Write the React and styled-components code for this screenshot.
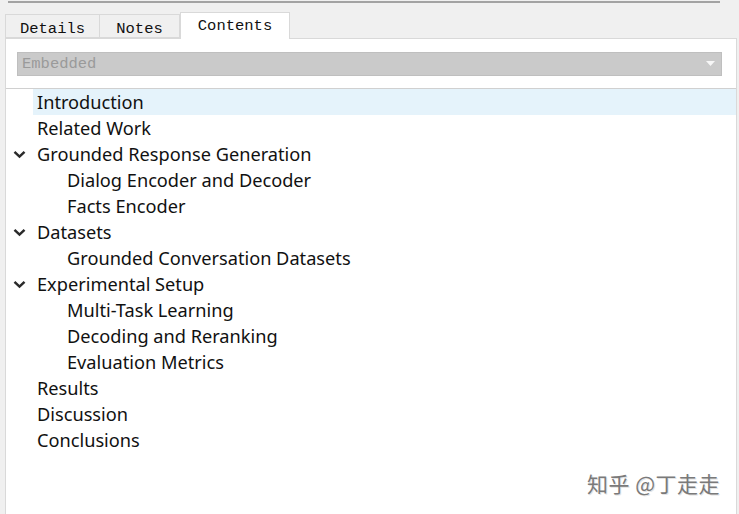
import React from 'react';
import styled, { createGlobalStyle } from 'styled-components';

const GlobalStyle = createGlobalStyle`
  html, body {
    margin: 0;
    padding: 0;
    background: #f0f0f0;
  }
`;

const Window = styled.div`
  position: relative;
  width: 739px;
  height: 514px;
  display: flex;
  flex-direction: column;
  background: #f0f0f0;
  overflow: hidden;
`;

const TopEdge = styled.div`
  height: 1px;
  margin: 0 19px 0 8px;
  border-bottom: 2px solid #a3a3a3;
`;

const TabStrip = styled.div`
  display: flex;
  align-items: flex-end;
  height: 35px;
  padding-left: 5px;
`;

const Tab = styled.div`
  box-sizing: border-box;
  height: ${(p) => (p.active ? '27px' : '24px')};
  width: ${(p) => p.w}px;
  margin-bottom: ${(p) => (p.active ? '-1px' : '0')};
  padding-top: ${(p) => (p.active ? '4px' : '5px')};
  text-align: center;
  font-family: 'Liberation Mono', monospace;
  font-size: 15.5px;
  color: #111;
  background: ${(p) => (p.active ? '#ffffff' : '#f0f0f0')};
  border: 1px solid #d9d9d9;
  border-bottom: ${(p) => (p.active ? 'none' : '1px solid #d9d9d9')};
  border-left: ${(p) => (p.first || p.active ? '1px solid #d9d9d9' : 'none')};
  position: relative;
  z-index: ${(p) => (p.active ? 1 : 0)};
`;

const Panel = styled.div`
  flex: 1;
  display: flex;
  flex-direction: column;
  margin: 0 2px 0 5px;
  background: #ffffff;
  border: 1px solid #d9d9d9;
  border-bottom: none;
`;

const Combo = styled.div`
  display: flex;
  align-items: center;
  justify-content: space-between;
  box-sizing: border-box;
  height: 24px;
  margin: 13px 14px 0 11px;
  padding: 0 6px 0 4px;
  background: #cacaca;
  border: 1px solid #bfbfbf;
  font-family: 'Liberation Mono', monospace;
  font-size: 15.5px;
  color: #9a9a9a;
`;

const Tree = styled.div`
  margin-top: 12px;
  border-top: 1px solid #d0d0d0;
  display: flex;
  flex-direction: column;
`;

const Row = styled.div`
  display: flex;
  height: 26px;
  align-items: stretch;
`;

const Toggle = styled.div`
  width: 27px;
  display: flex;
  align-items: center;
  justify-content: center;
`;

const Label = styled.div`
  flex: 1;
  display: flex;
  align-items: center;
  padding-left: ${(p) => 4 + p.level * 30}px;
  background: ${(p) => (p.selected ? '#e5f3fb' : 'transparent')};
  font-family: 'Noto Sans', 'Open Sans', sans-serif;
  font-size: 18.2px;
  color: #111;
  white-space: nowrap;
`;

const Watermark = styled.div`
  position: absolute;
  right: 19px;
  bottom: 16px;
  font-family: 'Noto Sans CJK SC', sans-serif;
  font-size: 21px;
  color: #7a7a7a;
  text-shadow: 1px 1px 0 #e4e4e4;
  letter-spacing: 0.5px;
`;

const Chevron = () => (
  <svg width="13" height="9" viewBox="0 0 13 9">
    <path d="M1.5 1.8 L6.5 6.6 L11.5 1.8" fill="none" stroke="#2a2a2a" strokeWidth="2.5" />
  </svg>
);

const ComboArrow = () => (
  <svg width="9" height="6" viewBox="0 0 9 6">
    <path d="M0 0 H9 L4.5 5 Z" fill="#ffffff" opacity="0.85" />
  </svg>
);

const items = [
  { text: 'Introduction', level: 0, selected: true },
  { text: 'Related Work', level: 0 },
  { text: 'Grounded Response Generation', level: 0, open: true },
  { text: 'Dialog Encoder and Decoder', level: 1 },
  { text: 'Facts Encoder', level: 1 },
  { text: 'Datasets', level: 0, open: true },
  { text: 'Grounded Conversation Datasets', level: 1 },
  { text: 'Experimental Setup', level: 0, open: true },
  { text: 'Multi-Task Learning', level: 1 },
  { text: 'Decoding and Reranking', level: 1 },
  { text: 'Evaluation Metrics', level: 1 },
  { text: 'Results', level: 0 },
  { text: 'Discussion', level: 0 },
  { text: 'Conclusions', level: 0 },
];

export default function App() {
  return (
    <Window>
      <GlobalStyle />
      <TopEdge />
      <TabStrip>
        <Tab first w={95}>Details</Tab>
        <Tab w={80}>Notes</Tab>
        <Tab active w={110}>Contents</Tab>
      </TabStrip>
      <Panel>
        <Combo>
          <span>Embedded</span>
          <ComboArrow />
        </Combo>
        <Tree>
          {items.map((it) => (
            <Row key={it.text}>
              <Toggle>{it.open && <Chevron />}</Toggle>
              <Label level={it.level} selected={it.selected}>
                {it.text}
              </Label>
            </Row>
          ))}
        </Tree>
      </Panel>
      <Watermark>知乎 @丁走走</Watermark>
    </Window>
  );
}
